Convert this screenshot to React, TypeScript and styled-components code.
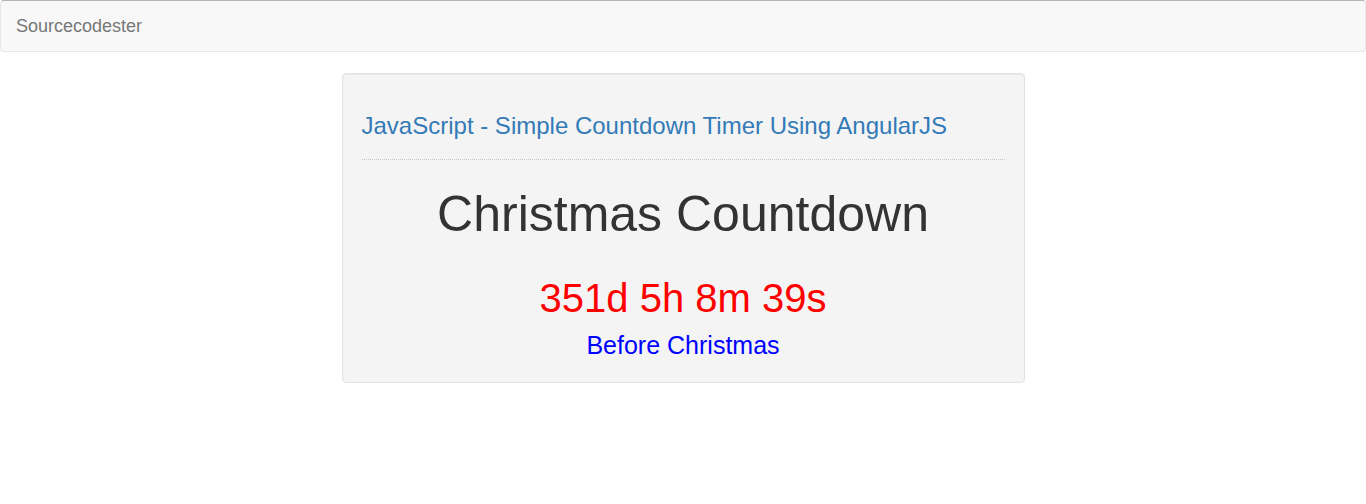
import React from "react";
import styled, { createGlobalStyle } from "styled-components";

const Global = createGlobalStyle`
  html, body { margin: 0; padding: 0; background: #fff; }
  body {
    font-family: "Liberation Sans", Arial, Helvetica, sans-serif;
    font-size: 14px;
    line-height: 1.42857143;
    color: #333;
  }
  * { box-sizing: border-box; }
`;

const Navbar = styled.nav`
  min-height: 52px;
  background: #f8f8f8;
  border: 1px solid #e7e7e7;
  border-top-color: #b4b4b4;
  border-radius: 4px;
  margin-bottom: 21px;
  display: flex;
  align-items: flex-start;
`;

const Brand = styled.a`
  display: block;
  padding: 15px 15px;
  font-size: 18px;
  line-height: 20px;
  color: #777;
  text-decoration: none;
`;

const Well = styled.section`
  width: 683px;
  margin: 0 auto;
  padding: 19px;
  background: #f4f4f4;
  border: 1px solid #e3e3e3;
  border-radius: 4px;
  box-shadow: inset 0 1px 1px rgba(0, 0, 0, 0.05);
`;

const Heading = styled.h3`
  margin: 20px 0 0;
  font-size: 24px;
  font-weight: 500;
  line-height: 1.1;
  color: #337ab7;
`;

const Rule = styled.hr`
  margin: 20px 0 0;
  border: 0;
  border-top: 1px dotted #c8c8c8;
  height: 0;
`;

const Center = styled.div`
  display: flex;
  flex-direction: column;
  align-items: center;
  text-align: center;
  padding-top: 27px;
`;

const Title = styled.h1`
  margin: 0;
  font-size: 50px;
  font-weight: 500;
  line-height: 55px;
  color: #333;
`;

const Timer = styled.div`
  margin-top: 28px;
  font-size: 40px;
  line-height: 57px;
  color: #ff0000;
`;

const Caption = styled.div`
  font-size: 25px;
  line-height: 36px;
  color: #0000ff;
`;

export default function App() {
  return (
    <>
      <Global />
      <Navbar>
        <Brand href="#">Sourcecodester</Brand>
      </Navbar>
      <Well>
        <Heading>JavaScript - Simple Countdown Timer Using AngularJS</Heading>
        <Rule />
        <Center>
          <Title>Christmas Countdown</Title>
          <Timer>351d 5h 8m 39s</Timer>
          <Caption>Before Christmas</Caption>
        </Center>
      </Well>
    </>
  );
}
